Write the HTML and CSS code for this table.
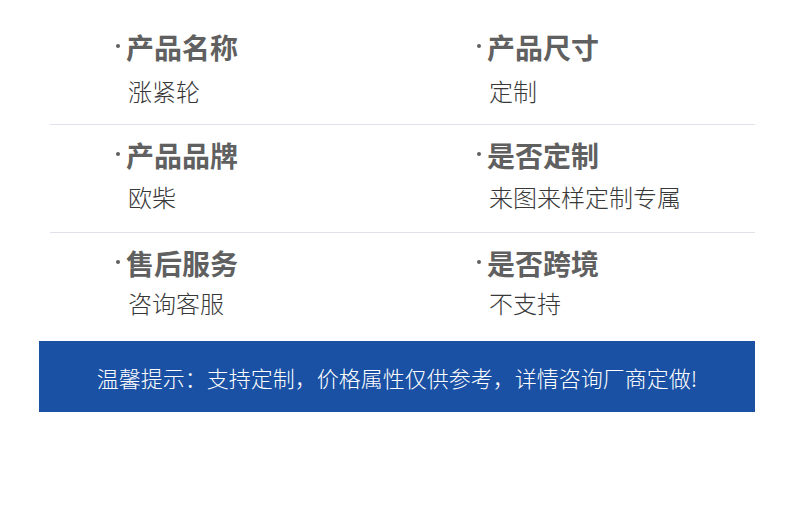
FILE: index.html
```html
<!DOCTYPE html>
<html lang="zh">
<head>
<meta charset="utf-8">
<link rel="stylesheet" href="styles.css">
</head>
<body>
<div class="page">
  <div class="specs">
    <div class="row">
      <div class="cell"><div class="label"><span class="dot"></span>产品名称</div><div class="value">涨紧轮</div></div>
      <div class="cell"><div class="label"><span class="dot"></span>产品尺寸</div><div class="value">定制</div></div>
    </div>
    <div class="row">
      <div class="cell"><div class="label"><span class="dot"></span>产品品牌</div><div class="value">欧柴</div></div>
      <div class="cell"><div class="label"><span class="dot"></span>是否定制</div><div class="value">来图来样定制专属</div></div>
    </div>
    <div class="row">
      <div class="cell"><div class="label"><span class="dot"></span>售后服务</div><div class="value">咨询客服</div></div>
      <div class="cell"><div class="label"><span class="dot"></span>是否跨境</div><div class="value">不支持</div></div>
    </div>
  </div>
  <div class="notice">温馨提示：支持定制，价格属性仅供参考，详情咨询厂商定做!</div>
</div>
</body>
</html>
```
FILE: styles.css
```css
html, body {
  margin: 0;
  padding: 0;
  background: #ffffff;
}
body {
  font-family: "Noto Sans CJK SC", "Noto Sans", sans-serif;
}
.page {
  width: 800px;
  height: 509px;
  padding-top: 17px;
  box-sizing: border-box;
}
.specs {
  margin-left: 50px;
  width: 705px;
}
.row {
  display: grid;
  grid-template-columns: 361px 1fr;
  padding: 12px 0 17px;
  border-bottom: 1px solid #e1e1ee;
}
.row:first-child .cell {
  gap: 8px;
}
.row:first-child {
  padding-bottom: 15px;
}
.row:last-child {
  border-bottom: none;
  padding-bottom: 20px;
}
.row:last-child .cell {
  gap: 4px;
}
.cell {
  padding-left: 66px;
  display: flex;
  flex-direction: column;
  gap: 6px;
}
.label {
  font-size: 28px;
  line-height: 36px;
  font-weight: 700;
  color: #606060;
  display: flex;
  align-items: center;
  gap: 6px;
}
.dot {
  width: 4px;
  height: 4px;
  border-radius: 50%;
  background: #606060;
  margin-top: -2px;
}
.value {
  padding-left: 12px;
  font-size: 24px;
  line-height: 36px;
  font-weight: 300;
  color: #383838;
}
.notice {
  margin-left: 39px;
  width: 716px;
  height: 71px;
  background: #1a51a4;
  color: #ffffff;
  font-size: 22px;
  font-weight: 300;
  display: flex;
  align-items: center;
  justify-content: center;
}
```
